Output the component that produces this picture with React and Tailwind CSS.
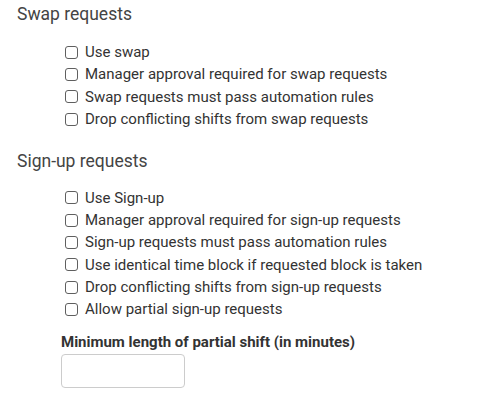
const swapOptions = [
  "Use swap",
  "Manager approval required for swap requests",
  "Swap requests must pass automation rules",
  "Drop conflicting shifts from swap requests",
];

const signupOptions = [
  "Use Sign-up",
  "Manager approval required for sign-up requests",
  "Sign-up requests must pass automation rules",
  "Use identical time block if requested block is taken",
  "Drop conflicting shifts from sign-up requests",
  "Allow partial sign-up requests",
];

function Option({ label }) {
  return (
    <label className="flex items-center h-[22.4px] text-[15px] text-[#333]">
      <input
        type="checkbox"
        className="appearance-none w-[13px] h-[13px] border border-[#5f5f5f] rounded-[3px] bg-white mr-[7px] shrink-0"
      />
      <span>{label}</span>
    </label>
  );
}

export default function App() {
  return (
    <div className="min-h-screen bg-white pl-[17px] pt-[3px] font-['Roboto',sans-serif]">
      <h2 className="text-[17.5px] leading-[22px] text-[#444]">Swap requests</h2>
      <div className="ml-[48px] mt-[16px]">
        {swapOptions.map((o) => (
          <Option key={o} label={o} />
        ))}
      </div>

      <h2 className="text-[17.5px] leading-[22px] text-[#444] mt-[19px]">Sign-up requests</h2>
      <div className="ml-[48px] mt-[15px]">
        {signupOptions.map((o) => (
          <Option key={o} label={o} />
        ))}
      </div>

      <div className="ml-[44px] mt-[11px]">
        <div className="text-[15px] leading-[20px] font-bold text-[#333]">
          Minimum length of partial shift (in minutes)
        </div>
        <input
          type="text"
          className="mt-[2px] w-[124px] h-[34px] border border-[#ccc] rounded-[4px] px-2 text-[14px] outline-none"
        />
      </div>
    </div>
  );
}
